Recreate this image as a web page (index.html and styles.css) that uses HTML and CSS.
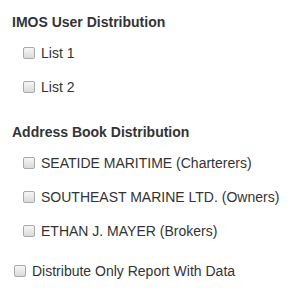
FILE: index.html
```html
<!DOCTYPE html>
<html lang="en">
<head>
    <meta charset="UTF-8">
    <title>Distribution</title>
    <link rel="stylesheet" href="styles.css">
</head>
<body>

<div class="panel">
    <h4>IMOS User Distribution</h4>
    <div class="list">
        <label class="row"><input type="checkbox"> List 1</label>
        <label class="row"><input type="checkbox"> List 2</label>
    </div>

    <h4 class="section">Address Book Distribution</h4>
    <div class="list">
        <label class="row"><input type="checkbox"> SEATIDE MARITIME (Charterers)</label>
        <label class="row"><input type="checkbox"> SOUTHEAST MARINE LTD. (Owners)</label>
        <label class="row"><input type="checkbox"> ETHAN J. MAYER (Brokers)</label>
    </div>

    <label class="row only-data"><input type="checkbox"> Distribute Only Report With Data</label>
</div>

</body>
</html>
```

FILE: styles.css
```css
body {
    margin: 0;
    background-color: #ffffff;
    font-family: 'Liberation Sans', Arial, sans-serif;
    color: #333;
}

.panel {
    padding: 12px 12px;
}

h4 {
    margin: 0;
    font-size: 14px;
    font-weight: 700;
    line-height: 20px;
    color: #333;
}

.section {
    margin-top: 18px;
}

.list {
    margin-top: 4px;
    padding-left: 11px;
}

.row {
    display: flex;
    align-items: center;
    height: 34px;
    font-size: 14px;
}

.only-data {
    margin-top: 6px;
    padding-left: 2px;
}

input[type="checkbox"] {
    -webkit-appearance: none;
    appearance: none;
    box-sizing: border-box;
    width: 12px;
    height: 12px;
    margin: 0 6px 0 0;
    border: 1px solid #a9a9a9;
    border-radius: 2px;
    background: linear-gradient(#f6f6f6, #dadada);
}
```
